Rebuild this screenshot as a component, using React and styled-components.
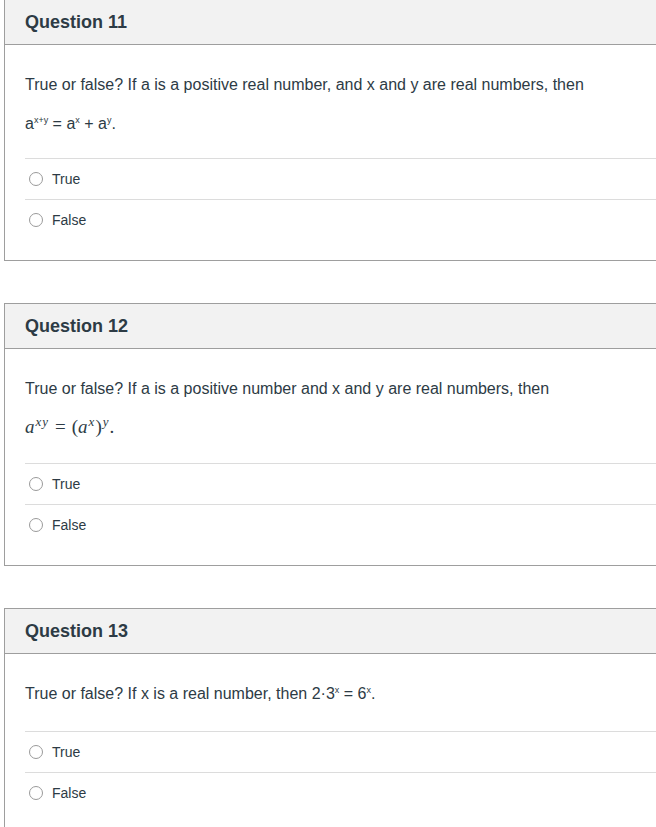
import React from 'react';
import styled, { createGlobalStyle } from 'styled-components';

const GlobalStyle = createGlobalStyle`
	html, body {
		margin: 0;
		padding: 0;
		background: #fff;
		overflow: hidden;
	}
	body {
		font-family: "Liberation Sans", Helvetica, Arial, sans-serif;
		color: #2d3b45;
	}
`;

const Page = styled.div`
	margin-top: -1px;
	padding-left: 4px;
	display: flex;
	flex-direction: column;
	gap: 42px;
`;

const Card = styled.section`
	border: 1px solid #9e9e9e;
	border-right: none;
	background: #fff;
`;

const Header = styled.header`
	height: 44px;
	display: flex;
	align-items: center;
	padding-left: 20px;
	background: #f2f2f2;
	border-bottom: 1px solid #9e9e9e;
`;

const Title = styled.h2`
	margin: 0;
	font-size: 18px;
	font-weight: 700;
	color: #2d3b45;
`;

const Body = styled.div`
	padding: 28px 0 20px 20px;
`;

const Text = styled.p`
	margin: 0 0 15px;
	height: 24px;
	font-size: 16px;
	line-height: 24px;
	color: #2d3b45;
	&:last-of-type {
		margin-bottom: ${p => p.$tail}px;
	}
`;

const Sup = styled.span`
	position: relative;
	top: -6px;
	font-size: 9px;
	line-height: 0;
`;

const Math = styled.span`
	font-family: "Liberation Serif", "Times New Roman", serif;
	font-size: 19px;
	line-height: 0;
	color: #2d3b45;
`;

const MathVar = styled.i`
	font-style: italic;
`;

const MathOp = styled.span`
	margin: 0 6px;
`;

const MathSup = styled.span`
	position: relative;
	top: -7px;
	margin-left: 1px;
	font-size: 13px;
	font-style: italic;
	letter-spacing: 1px;
	line-height: 0;
`;

const Answers = styled.div`
	display: flex;
	flex-direction: column;
`;

const Answer = styled.label`
	height: 40px;
	display: flex;
	align-items: center;
	gap: 9px;
	padding-left: 4px;
	border-top: 1px solid #dcdcdc;
	font-size: 14px;
	color: #2d3b45;
`;

const Radio = styled.span`
	width: 12px;
	height: 12px;
	border-radius: 50%;
	border: 1px solid #9a9a9a;
	background: #fff;
	flex-shrink: 0;
`;

const AnswerList = () => (
	<Answers>
		<Answer><Radio />True</Answer>
		<Answer><Radio />False</Answer>
	</Answers>
);

const App = () => (
	<>
		<GlobalStyle />
		<Page>
			<Card>
				<Header><Title>Question 11</Title></Header>
				<Body>
					<Text>True or false? If a is a positive real number, and x and y are real numbers, then</Text>
					<Text $tail={22}>
						a<Sup>x+y</Sup> = a<Sup>x</Sup> + a<Sup>y</Sup>.
					</Text>
					<AnswerList />
				</Body>
			</Card>

			<Card>
				<Header><Title>Question 12</Title></Header>
				<Body>
					<Text>True or false? If a is a positive number and x and y are real numbers, then</Text>
					<Text $tail={23}>
						<Math>
							<MathVar>a</MathVar><MathSup>xy</MathSup><MathOp>=</MathOp>(<MathVar>a</MathVar><MathSup>x</MathSup>)<MathSup>y</MathSup>.
						</Math>
					</Text>
					<AnswerList />
				</Body>
			</Card>

			<Card>
				<Header><Title>Question 13</Title></Header>
				<Body>
					<Text $tail={25}>
						True or false? If x is a real number, then 2·3<Sup>x</Sup> = 6<Sup>x</Sup>.
					</Text>
					<AnswerList />
				</Body>
			</Card>
		</Page>
	</>
);

export default App;
